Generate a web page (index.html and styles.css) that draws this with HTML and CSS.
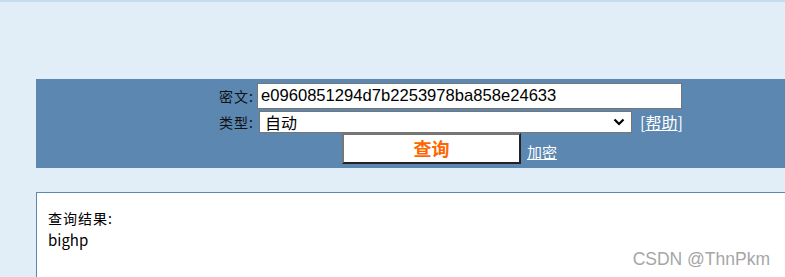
FILE: index.html
```html
<!DOCTYPE html>
<html lang="zh-CN">
<head>
<meta charset="utf-8">
<title>查询</title>
<link rel="stylesheet" href="styles.css">
</head>
<body>
<div class="topline"></div>
<div class="page">
  <form class="band">
    <div class="row row1">
      <span class="label">密文:</span>
      <div class="textbox">e0960851294d7b2253978ba858e24633</div>
    </div>
    <div class="row row2">
      <span class="label">类型:</span>
      <div class="selectbox">
        <span class="selval">自动</span>
        <svg class="chev" width="12" height="8" viewBox="0 0 12 8"><path d="M1.5 1.5 L6 6 L10.5 1.5" fill="none" stroke="#000" stroke-width="2.2"/></svg>
      </div>
      <span class="help">[<a href="#">帮助</a>]</span>
    </div>
    <div class="row row3">
      <div class="btn">查询</div>
      <a class="enc" href="#">加密</a>
    </div>
  </form>
  <div class="result">
    <div class="rtitle">查询结果:</div>
    <div class="rvalue">bighp</div>
  </div>
</div>
<div class="watermark">CSDN @ThnPkm</div>
</body>
</html>
```
FILE: styles.css
```css
html, body {
  margin: 0;
  padding: 0;
}
body {
  background: #e1eef7;
  width: 785px;
  height: 277px;
  overflow: hidden;
  position: relative;
  font-family: "Noto Sans CJK SC", "Liberation Sans", sans-serif;
  color: #000;
}
.topline {
  height: 2px;
  background: #c6dbee;
}
.page {
  padding-top: 77px;
  padding-left: 36px;
  width: 749px;
}
.band {
  margin: 0;
  background: #5b87b1;
  height: 89px;
  box-sizing: border-box;
  padding: 4px 0 0 171px;
  display: flex;
  flex-direction: column;
}
.row {
  display: flex;
  align-items: center;
}
.label {
  width: 47px;
  text-align: right;
  font-size: 14px;
  letter-spacing: 1px;
  color: #111;
  padding-right: 3px;
  line-height: 16px;
}
.row1 { height: 26px; }
.row2 { height: 22px; margin-top: 2px; }
.row3 { height: 31px; }
.textbox {
  width: 425px;
  height: 26px;
  box-sizing: border-box;
  background: #fff;
  border: 1px solid #767676;
  font-family: "Liberation Sans", sans-serif;
  font-size: 16.6px;
  line-height: 24px;
  padding-left: 3px;
  color: #000;
}
.selectbox {
  margin-left: 2px;
  width: 373px;
  height: 22px;
  box-sizing: border-box;
  background: #fff;
  border: 1px solid #767676;
  display: flex;
  align-items: center;
  justify-content: space-between;
  padding: 0 6px 0 5px;
}
.selval {
  font-size: 16px;
  line-height: 20px;
}
.chev {
  display: block;
}
.help {
  margin-left: 8px;
  font-size: 16px;
  color: #fff;
  line-height: 20px;
}
.help a {
  color: #fff;
  text-decoration: underline;
}
.btn {
  margin-left: 135px;
  width: 179px;
  height: 31px;
  box-sizing: border-box;
  background: #fff;
  border-style: solid;
  border-width: 2px;
  border-color: #767676 #222 #222 #767676;
  color: #ff6600;
  font-weight: bold;
  font-size: 18px;
  line-height: 26px;
  text-align: center;
}
.enc {
  margin-left: 6px;
  margin-top: 6px;
  font-size: 15px;
  color: #fff;
  text-decoration: underline;
  line-height: 18px;
}
.result {
  margin-top: 24px;
  background: #fff;
  border: 1px solid #5b87b1;
  border-right: none;
  border-bottom: none;
  height: 85px;
  box-sizing: border-box;
  padding: 14px 0 0 11px;
}
.rtitle {
  font-size: 14px;
  letter-spacing: 1px;
  line-height: 22px;
}
.rvalue {
  font-size: 15px;
  line-height: 22px;
}
.watermark {
  position: absolute;
  right: 15px;
  bottom: 7px;
  font-family: "Liberation Sans", sans-serif;
  font-size: 17.5px;
  color: #a6a6a6;
}
```
